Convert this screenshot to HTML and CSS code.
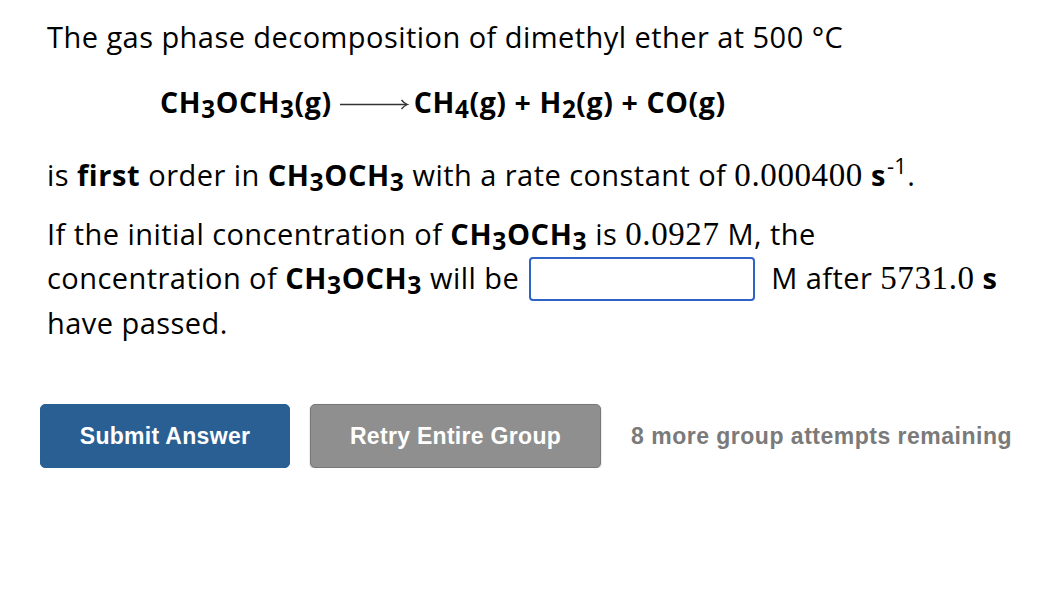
FILE: index.html
```html
<!DOCTYPE html>
<html>
<head>
<meta charset="utf-8">
<link rel="stylesheet" href="styles.css">
</head>
<body>
<div class="page">
  <p class="intro">The gas phase decomposition of dimethyl ether at 500 °C</p>
  <div class="equation"><b>CH<sub>3</sub>OCH<sub>3</sub>(g)</b><span class="arrow"><svg width="70" height="14" viewBox="0 0 70 14"><path d="M1 7.5H67" stroke="#333" stroke-width="1.3"/><path d="M62.5 3Q65 6.3 68.5 7.5Q65 8.7 62.5 12" stroke="#333" stroke-width="1.3" fill="none"/></svg></span><b>CH<sub>4</sub>(g) + H<sub>2</sub>(g) + CO(g)</b></div>
  <p class="line first">is <b>first</b> order in <b>CH<sub>3</sub>OCH<sub>3</sub></b> with a rate constant of <span class="num">0.000400</span> <b>s</b><sup>-1</sup>.</p>
  <p class="para">If the initial concentration of <b>CH<sub>3</sub>OCH<sub>3</sub></b> is <span class="num">0.0927</span> M, the<br>concentration of <b>CH<sub>3</sub>OCH<sub>3</sub></b> will be <input class="answer" type="text"> M after <span class="num">5731.0</span> <b>s</b><br>have passed.</p>
  <div class="actions">
    <button class="btn submit">Submit Answer</button>
    <button class="btn retry">Retry Entire Group</button>
    <span class="remaining">8 more group attempts remaining</span>
  </div>
</div>
</body>
</html>
```
FILE: styles.css
```css
body {
  margin: 0;
  background: #fff;
  font-family: "Open Sans", "Noto Sans", sans-serif;
  color: #000;
}
.page {
  padding: 16px 0 0 47px;
  font-size: 29px;
  letter-spacing: 0.45px;
}
p { margin: 0; }
b { font-weight: 700; letter-spacing: 0.6px; }
sub {
  font-size: 0.85em;
  vertical-align: -0.22em;
  line-height: 0;
}
sup {
  font-size: 0.75em;
  vertical-align: 0.55em;
  line-height: 0;
  margin-left: 1px;
}
.intro { line-height: 42px; }
.equation {
  margin: 24px 0 0 113px;
  font-size: 28.5px;
  line-height: 40px;
  display: flex;
  align-items: center;
}
.arrow {
  display: inline-flex;
  margin: 3px 5px 0 7px;
}
.first {
  margin-top: 32px;
  line-height: 42px;
}
.num {
  font-family: "Liberation Serif", "Times New Roman", serif;
  font-size: 33px;
  letter-spacing: 0.6px;
}
.para {
  margin-top: 16px;
  line-height: 43px;
}
.answer {
  width: 226px;
  height: 44px;
  box-sizing: border-box;
  border: 2px solid #2f63c6;
  border-radius: 4px;
  vertical-align: middle;
  margin: -4px 8px 0 2px;
  padding: 0;
  font-size: 20px;
}
.actions {
  display: flex;
  align-items: center;
  margin: 60px 0 0 -7px;
}
.btn {
  font-family: "Liberation Sans", Arial, sans-serif;
  font-weight: 700;
  font-size: 23px;
  letter-spacing: 0.3px;
  color: #fff;
  height: 64px;
  border-radius: 5px;
  cursor: pointer;
}
.submit {
  width: 250px;
  background: #2a5f94;
  border: 1px solid #2a5f94;
}
.retry {
  width: 291px;
  margin-left: 20px;
  background: #8f8f8f;
  border: 1px solid #777;
  box-shadow: 0 1px 2px rgba(0,0,0,0.25);
}
.remaining {
  margin-left: 30px;
  font-family: "Liberation Sans", Arial, sans-serif;
  font-weight: 700;
  font-size: 23px;
  letter-spacing: 0.5px;
  color: #7a7a7a;
}
```
